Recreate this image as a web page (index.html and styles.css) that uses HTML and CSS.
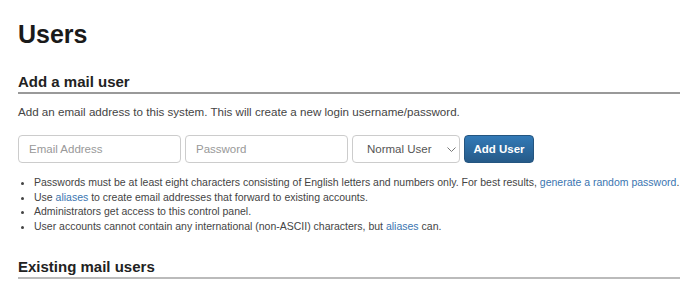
FILE: index.html
```html
<!DOCTYPE html>
<html lang="en">
<head>
    <meta charset="UTF-8">
    <title>Users</title>
    <link rel="stylesheet" href="styles.css">
</head>
<body>
    <div class="page">
        <h1>Users</h1>

        <h2>Add a mail user</h2>
        <p class="lead">Add an email address to this system. This will create a new login username/password.</p>

        <form class="add-form" onsubmit="return false">
            <input class="field email" type="email" placeholder="Email Address">
            <input class="field password" type="password" placeholder="Password">
            <div class="select-wrap">
                <select class="field privs">
                    <option>Normal User</option>
                    <option>Administrator</option>
                </select>
                <svg class="chevron" width="9" height="5" viewBox="0 0 9 5"><path d="M0.5 0.5l4 4 4-4" fill="none" stroke="#777" stroke-width="1"/></svg>
            </div>
            <button class="btn-primary" type="submit">Add User</button>
        </form>

        <ul class="notes">
            <li>Passwords must be at least eight characters consisting of English letters and numbers only. For best results, <a href="#">generate a random password</a>.</li>
            <li>Use <a href="#">aliases</a> to create email addresses that forward to existing accounts.</li>
            <li>Administrators get access to this control panel.</li>
            <li>User accounts cannot contain any international (non-ASCII) characters, but <a href="#">aliases</a> can.</li>
        </ul>

        <h2 class="existing">Existing mail users</h2>
    </div>
</body>
</html>
```

FILE: styles.css
```css
body {
    margin: 0;
    font-family: "Liberation Sans", Arial, sans-serif;
    color: #333;
    background: #fff;
    overflow: hidden;
}
.page {
    padding: 0 0 0 18px;
}
h1 {
    font-size: 25px;
    font-weight: bold;
    color: #1a1a1a;
    margin: 0;
    padding-top: 19px;
    line-height: 30px;
}
h2 {
    font-size: 15px;
    font-weight: bold;
    color: #222;
    margin: 24px 0 0;
    line-height: 18px;
    padding-bottom: 1px;
    border-bottom: 2px solid #999;
}
.lead {
    font-size: 11.6px;
    color: #444;
    margin: 10px 0 0;
    line-height: 16px;
}
.add-form {
    display: flex;
    gap: 4px;
    margin-top: 15px;
}
.field {
    height: 28px;
    box-sizing: border-box;
    border: 1px solid #ccc;
    border-radius: 4px;
    padding: 0 10px;
    font-family: inherit;
    font-size: 11.5px;
    color: #555;
    background: #fff;
}
.field::placeholder {
    color: #999;
}
.email, .password {
    width: 163px;
}
.select-wrap {
    position: relative;
}
.privs {
    width: 108px;
    appearance: none;
    -webkit-appearance: none;
    padding-left: 14px;
}
.chevron {
    position: absolute;
    right: 4px;
    top: 12px;
    pointer-events: none;
}
.btn-primary {
    width: 70px;
    height: 28px;
    border: 1px solid #245580;
    border-radius: 4px;
    background: linear-gradient(to bottom, #337ab7 0%, #265a88 100%);
    color: #fff;
    font-family: inherit;
    font-size: 11.5px;
    font-weight: bold;
    padding: 0;
    cursor: pointer;
}
.notes {
    margin: 12px 0 0;
    padding-left: 16px;
    font-size: 10.5px;
    line-height: 14.7px;
    color: #444;
}
.notes a {
    color: #3a75b0;
    text-decoration: none;
}
.existing {
    margin-top: 24px;
    border-bottom-color: #bbb;
}
```
